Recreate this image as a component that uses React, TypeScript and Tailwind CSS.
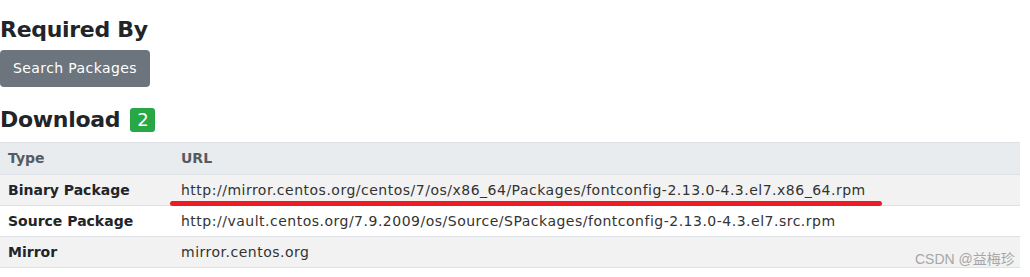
const rows = [
  { type: "Binary Package", url: "http://mirror.centos.org/centos/7/os/x86_64/Packages/fontconfig-2.13.0-4.3.el7.x86_64.rpm", bg: "bg-[#f2f2f2]" },
  { type: "Source Package", url: "http://vault.centos.org/7.9.2009/os/Source/SPackages/fontconfig-2.13.0-4.3.el7.src.rpm", bg: "bg-white" },
  { type: "Mirror", url: "mirror.centos.org", bg: "bg-[#f2f2f2]" },
];

export default function App() {
  return (
    <div className="relative h-[277px] w-[1030px] overflow-hidden bg-white text-[#212529] font-['DejaVu_Sans',sans-serif]">
      <div className="flex flex-col pr-[10px] pt-[17px]">
        <h3 className="text-[22px] font-bold leading-[26px] tracking-[-0.3px]">Required By</h3>
        <div className="mt-[7px]">
          <button className="h-[37px] rounded-[4px] bg-[#6c757d] px-[13px] text-[14px] tracking-[0.4px] text-white">
            Search Packages
          </button>
        </div>
        <h3 className="mt-[20px] flex items-center gap-[10px] text-[22px] font-bold leading-[26px] tracking-[-0.3px]">
          Download
          <span className="flex h-[24px] w-[25px] items-center justify-center rounded-[3px] bg-[#28a745] text-[18px] font-normal text-white">
            2
          </span>
        </h3>
        <table className="mt-[9px] w-full border-collapse text-[14px]">
          <thead>
            <tr className="h-[32px] border-t border-[#dee2e6] bg-[#e9ecef] text-left text-[#555b61]">
              <th className="w-[173px] px-[8px] font-bold">Type</th>
              <th className="px-[8px] font-bold">URL</th>
            </tr>
          </thead>
          <tbody>
            {rows.map((r) => (
              <tr key={r.type} className={`h-[31px] border-t border-b border-[#dee2e6] ${r.bg}`}>
                <td className="px-[8px] font-bold">{r.type}</td>
                <td className="px-[8px] tracking-[0.5px] text-[#333]">{r.url}</td>
              </tr>
            ))}
          </tbody>
        </table>
      </div>
      <div className="absolute left-[170px] top-[201px] h-[5px] w-[712px] rounded-full bg-[#ec1c24]" />
      <div className="absolute left-[915px] top-[249px] text-[14px] text-[#a6a6a6] font-['Liberation_Sans','Noto_Sans_CJK_SC',sans-serif]">
        CSDN @益梅珍
      </div>
    </div>
  );
}
